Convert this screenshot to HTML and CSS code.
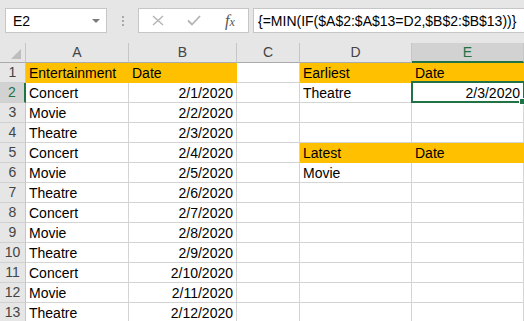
FILE: index.html
```html
<!DOCTYPE html>
<html lang="en">
<head>
  <meta charset="UTF-8" />
  <title>Earliest date</title>
  <link rel="stylesheet" href="styles.css">
</head>
<body>
  <!-- Formula bar -->
  <div class="toolbar">
    <div class="namebox">
      <span>E2</span>
      <span class="caret"></span>
    </div>
    <div class="grip"><i></i><i></i><i></i></div>
    <div class="fxbox">
      <svg width="12" height="11" viewBox="0 0 12 11"><path d="M1 1 L11 10 M11 1 L1 10" stroke="#b4b4b4" stroke-width="1.4" fill="none"/></svg>
      <svg width="14" height="11" viewBox="0 0 14 11"><path d="M1 5.5 L5 9.5 L13 1" stroke="#b4b4b4" stroke-width="1.8" fill="none"/></svg>
      <span class="fx">f<small>x</small></span>
    </div>
    <div class="formula">{=MIN(IF($A$2:$A$13=D2,$B$2:$B$13))}</div>
  </div>

  <!-- Grid -->
  <div class="sheet">
    <div class="hd corner"><span class="tri"></span></div>
    <div class="hd">A</div>
    <div class="hd">B</div>
    <div class="hd">C</div>
    <div class="hd">D</div>
    <div class="hd sel">E</div>

    <div class="rh">1</div>
    <div class="c fill">Entertainment</div>
    <div class="c fill">Date</div>
    <div class="c"></div>
    <div class="c fill">Earliest</div>
    <div class="c fill">Date</div>

    <div class="rh sel">2</div>
    <div class="c">Concert</div>
    <div class="c num">2/1/2020</div>
    <div class="c"></div>
    <div class="c">Theatre</div>
    <div class="c num active">2/3/2020<span class="handle"></span></div>

    <div class="rh">3</div>
    <div class="c">Movie</div>
    <div class="c num">2/2/2020</div>
    <div class="c"></div>
    <div class="c"></div>
    <div class="c"></div>

    <div class="rh">4</div>
    <div class="c">Theatre</div>
    <div class="c num">2/3/2020</div>
    <div class="c"></div>
    <div class="c"></div>
    <div class="c"></div>

    <div class="rh">5</div>
    <div class="c">Concert</div>
    <div class="c num">2/4/2020</div>
    <div class="c"></div>
    <div class="c fill">Latest</div>
    <div class="c fill">Date</div>

    <div class="rh">6</div>
    <div class="c">Movie</div>
    <div class="c num">2/5/2020</div>
    <div class="c"></div>
    <div class="c">Movie</div>
    <div class="c"></div>

    <div class="rh">7</div>
    <div class="c">Theatre</div>
    <div class="c num">2/6/2020</div>
    <div class="c"></div>
    <div class="c"></div>
    <div class="c"></div>

    <div class="rh">8</div>
    <div class="c">Concert</div>
    <div class="c num">2/7/2020</div>
    <div class="c"></div>
    <div class="c"></div>
    <div class="c"></div>

    <div class="rh">9</div>
    <div class="c">Movie</div>
    <div class="c num">2/8/2020</div>
    <div class="c"></div>
    <div class="c"></div>
    <div class="c"></div>

    <div class="rh">10</div>
    <div class="c">Theatre</div>
    <div class="c num">2/9/2020</div>
    <div class="c"></div>
    <div class="c"></div>
    <div class="c"></div>

    <div class="rh">11</div>
    <div class="c">Concert</div>
    <div class="c num">2/10/2020</div>
    <div class="c"></div>
    <div class="c"></div>
    <div class="c"></div>

    <div class="rh">12</div>
    <div class="c">Movie</div>
    <div class="c num">2/11/2020</div>
    <div class="c"></div>
    <div class="c"></div>
    <div class="c"></div>

    <div class="rh">13</div>
    <div class="c">Theatre</div>
    <div class="c num">2/12/2020</div>
    <div class="c"></div>
    <div class="c"></div>
    <div class="c"></div>
  </div>
</body>
</html>
```

FILE: styles.css
```css
body, html {
  margin: 0;
  padding: 0;
  width: 100%;
  height: 100%;
  overflow: hidden;
  background: #fff;
  font-family: "Liberation Sans", Arial, sans-serif;
  font-size: 14px;
  color: #000;
}
.toolbar {
  height: 43px;
  box-sizing: border-box;
  background: #e6e6e6;
  display: flex;
  align-items: flex-start;
  padding: 8px 0 0 5px;
  white-space: nowrap;
}
.namebox {
  width: 102px;
  height: 25px;
  box-sizing: border-box;
  background: #fff;
  border: 1px solid #c6c6c6;
  display: flex;
  align-items: center;
  justify-content: space-between;
  padding: 0 6px 0 7px;
}
.caret {
  width: 0;
  height: 0;
  border-left: 4px solid transparent;
  border-right: 4px solid transparent;
  border-top: 4px solid #7a7a7a;
}
.grip {
  width: 31px;
  height: 25px;
  display: flex;
  flex-direction: column;
  align-items: center;
  justify-content: center;
  gap: 2px;
}
.grip i {
  width: 2px;
  height: 2px;
  background: #a8a8a8;
}
.fxbox {
  width: 111px;
  height: 25px;
  box-sizing: border-box;
  background: #fff;
  border: 1px solid #c6c6c6;
  display: flex;
  align-items: center;
  padding: 0 0 0 13px;
  gap: 23px;
}
.fx {
  font-family: "Liberation Serif", serif;
  font-style: italic;
  font-size: 16px;
  color: #555;
  margin-left: 1px;
}
.fx small {
  font-size: 12px;
}
.formula {
  flex: 1;
  height: 25px;
  box-sizing: border-box;
  margin-left: 4px;
  margin-right: -10px;
  background: #fff;
  border: 1px solid #c6c6c6;
  padding: 3px 0 0 4px;
  line-height: 18px;
}
.sheet {
  display: grid;
  grid-template-columns: 26px 103px 108px 63px 112px 112px;
  grid-auto-rows: 20px;
}
.hd, .rh {
  background: #e6e6e6;
  color: #444;
  box-sizing: border-box;
  border-right: 1px solid #c6c6c6;
  border-bottom: 1px solid #ababab;
  display: flex;
  align-items: center;
  justify-content: center;
  line-height: 19px;
}
.rh {
  border-bottom-color: #d0d0d0;
  border-right-color: #c6c6c6;
}
.hd.sel {
  background: #d2d2d2;
  color: #217346;
  border-bottom: 2px solid #217346;
}
.rh.sel {
  background: #d2d2d2;
  color: #217346;
  border-right: 2px solid #217346;
}
.corner {
  position: relative;
}
.tri {
  position: absolute;
  right: 4px;
  bottom: 3px;
  width: 0;
  height: 0;
  border-left: 10px solid transparent;
  border-bottom: 10px solid #bdbdbd;
}
.c {
  box-sizing: border-box;
  border-right: 1px solid #d4d4d4;
  border-bottom: 1px solid #d4d4d4;
  padding: 0 3px 0 3px;
  line-height: 20px;
  white-space: nowrap;
}
.c.fill {
  background: #ffc000;
  border-color: #ffc000;
}
.num {
  text-align: right;
}
.active {
  position: relative;
}
.active::after {
  content: "";
  position: absolute;
  top: -2px;
  left: -1px;
  right: -2px;
  bottom: -1px;
  border: 2px solid #217346;
}
.handle {
  position: absolute;
  right: -3px;
  bottom: -3px;
  width: 5px;
  height: 5px;
  background: #217346;
  border: 1px solid #fff;
  z-index: 1;
}
```
